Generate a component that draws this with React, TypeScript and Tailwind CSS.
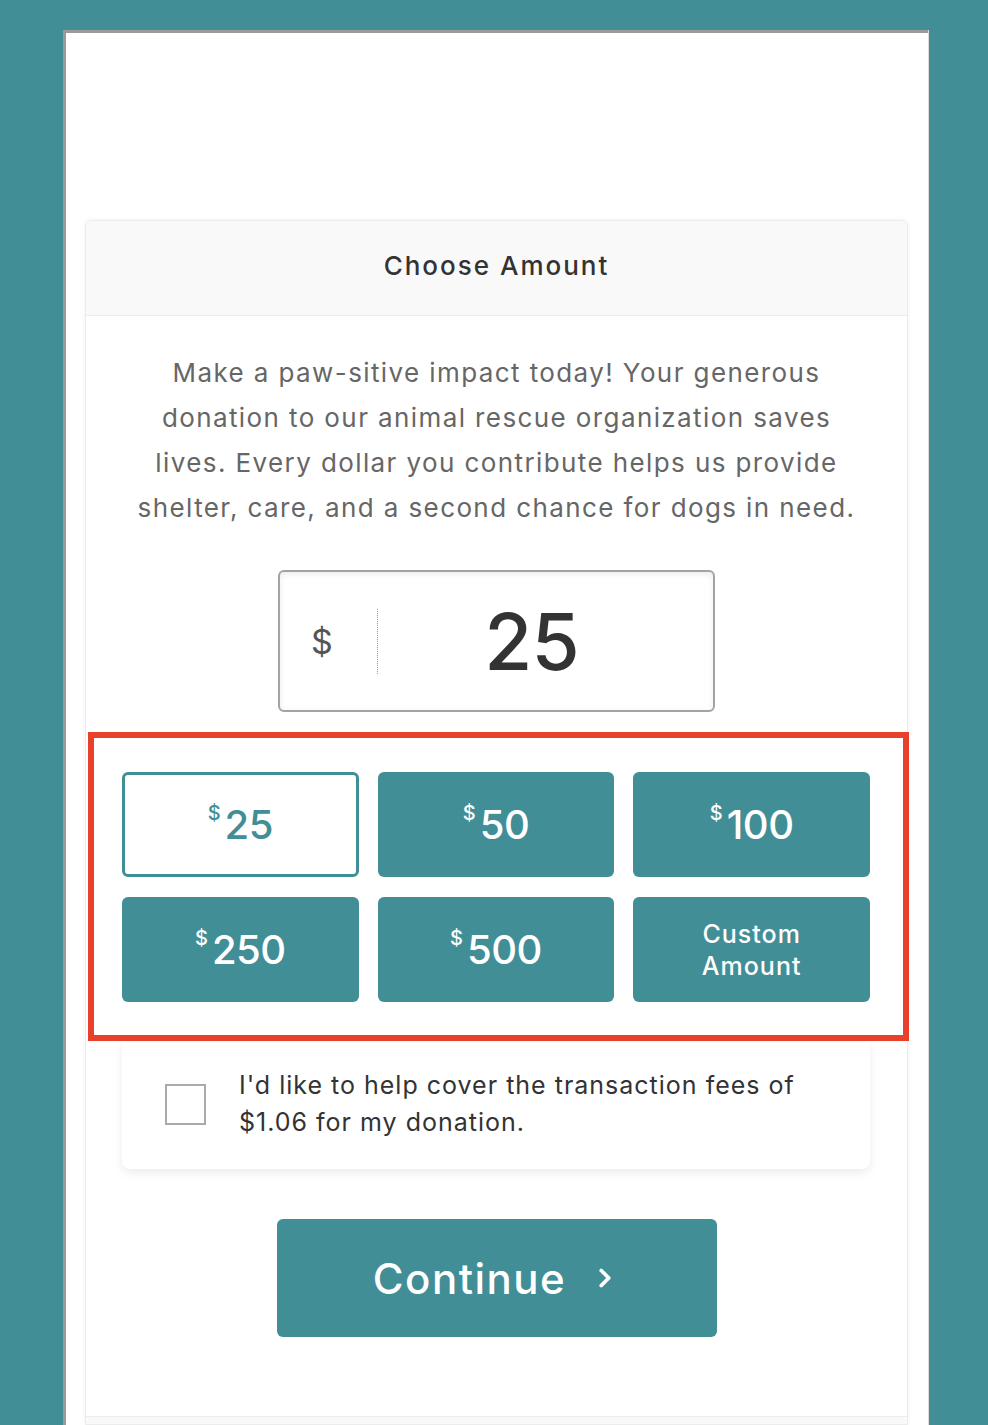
import React, { useState } from 'react';
import { ChevronRight } from 'lucide-react';

const amounts = [25, 50, 100, 250, 500];

function AmountButton({
  value,
  active,
  onClick,
}: {
  value: number;
  active: boolean;
  onClick: () => void;
}) {
  return (
    <button
      onClick={onClick}
      className={`h-[105px] rounded-md flex items-center justify-center ${
        active
          ? 'bg-white border-[3px] border-[#418e97] text-[#418e97]'
          : 'bg-[#418e97] text-white'
      }`}
    >
      <span className="flex items-start font-medium leading-none">
        <span className="text-[20px] mt-[-2px] mr-[4px]">$</span>
        <span className="text-[40px] tracking-[-0.5px]">{value}</span>
      </span>
    </button>
  );
}

export default function App() {
  const [amount, setAmount] = useState(25);
  const [coverFees, setCoverFees] = useState(false);

  return (
    <div
      className="min-h-screen bg-[#418e97] pt-[30px] pl-[63px] pr-[60px] flex"
      style={{ fontFamily: 'Inter, "Noto Sans", sans-serif' }}
    >
      <div className="flex-1 bg-white border-t-[3px] border-l-[3px] border-[#9a9a9a] shadow-[1px_0_0_#dcdcdc] pt-[187px] pl-[19px] pr-[20px] flex flex-col">
        <div className="flex-1 border border-[#ececec] rounded-t-md shadow-[0_0_4px_rgba(0,0,0,0.06)] flex flex-col">
          <div className="h-[95px] pb-[5px] bg-[#f9f9f9] border-b border-[#ececec] rounded-t-md flex items-center justify-center">
            <h2 className="text-[26px] font-medium text-[#333] tracking-[2px]">Choose Amount</h2>
          </div>

          <div className="flex-1 flex flex-col">
            <p className="pt-[34px] text-center text-[26px] leading-[45px] text-[#666] tracking-[1.4px]">
              Make a paw-sitive impact today! Your generous
              <br />
              donation to our animal rescue organization saves
              <br />
              lives. Every dollar you contribute helps us provide
              <br />
              shelter, care, and a second chance for dogs in need.
            </p>

            <div className="mt-[40px] mx-auto w-[437px] h-[142px] border-2 border-[#a3a3a3] rounded-md shadow-[inset_0_2px_6px_rgba(0,0,0,0.08)] flex items-center">
              <span className="pl-[31px] w-[97px] text-[34px] text-[#555]">$</span>
              <span className="h-[65px] border-l border-dotted border-[#999]"></span>
              <span className="flex-1 text-center pr-[28px] text-[78px] font-medium text-[#333] tracking-[-1px]">
                {amount}
              </span>
            </div>

            <div className="mt-[20px] ml-[2px] mr-[-2px] border-[6px] border-[#e8402a] pl-[28px] pr-[33px] pt-[34px] pb-[33px]">
              <div className="grid grid-cols-3 gap-x-[19px] gap-y-[20px]">
                {amounts.map((a) => (
                  <AmountButton
                    key={a}
                    value={a}
                    active={amount === a}
                    onClick={() => setAmount(a)}
                  />
                ))}
                <button className="h-[105px] rounded-md bg-[#418e97] text-white text-[25px] leading-[32px] font-medium tracking-[1px]">
                  Custom
                  <br />
                  Amount
                </button>
              </div>
            </div>

            <div className="ml-[36px] mr-[37px] mt-[2px] rounded-b-lg bg-white shadow-[0_4px_10px_rgba(0,0,0,0.08)] flex items-center pl-[43px] pr-[30px] pt-[24px] pb-[28px]">
              <button
                onClick={() => setCoverFees(!coverFees)}
                className="w-[41px] h-[41px] border-2 border-[#aaa] shrink-0 flex items-center justify-center text-[#418e97] text-[26px]"
              >
                {coverFees ? '✓' : ''}
              </button>
              <p className="ml-[33px] text-[25px] leading-[37px] text-[#333] tracking-[1px]">
                I'd like to help cover the transaction fees of
                <br />
                $1.06 for my donation.
              </p>
            </div>

            <button className="mt-[50px] mx-auto w-[440px] h-[118px] rounded-md bg-[#418e97] text-white flex items-center justify-center gap-[24px]">
              <span className="text-[42px] font-medium tracking-[1.5px]">Continue</span>
              <ChevronRight size={30} strokeWidth={3} />
            </button>

            <div className="mt-[79px] flex-1 min-h-[8px] bg-[#f9f9f9] border-t border-[#ececec]"></div>
          </div>
        </div>
      </div>
    </div>
  );
}
